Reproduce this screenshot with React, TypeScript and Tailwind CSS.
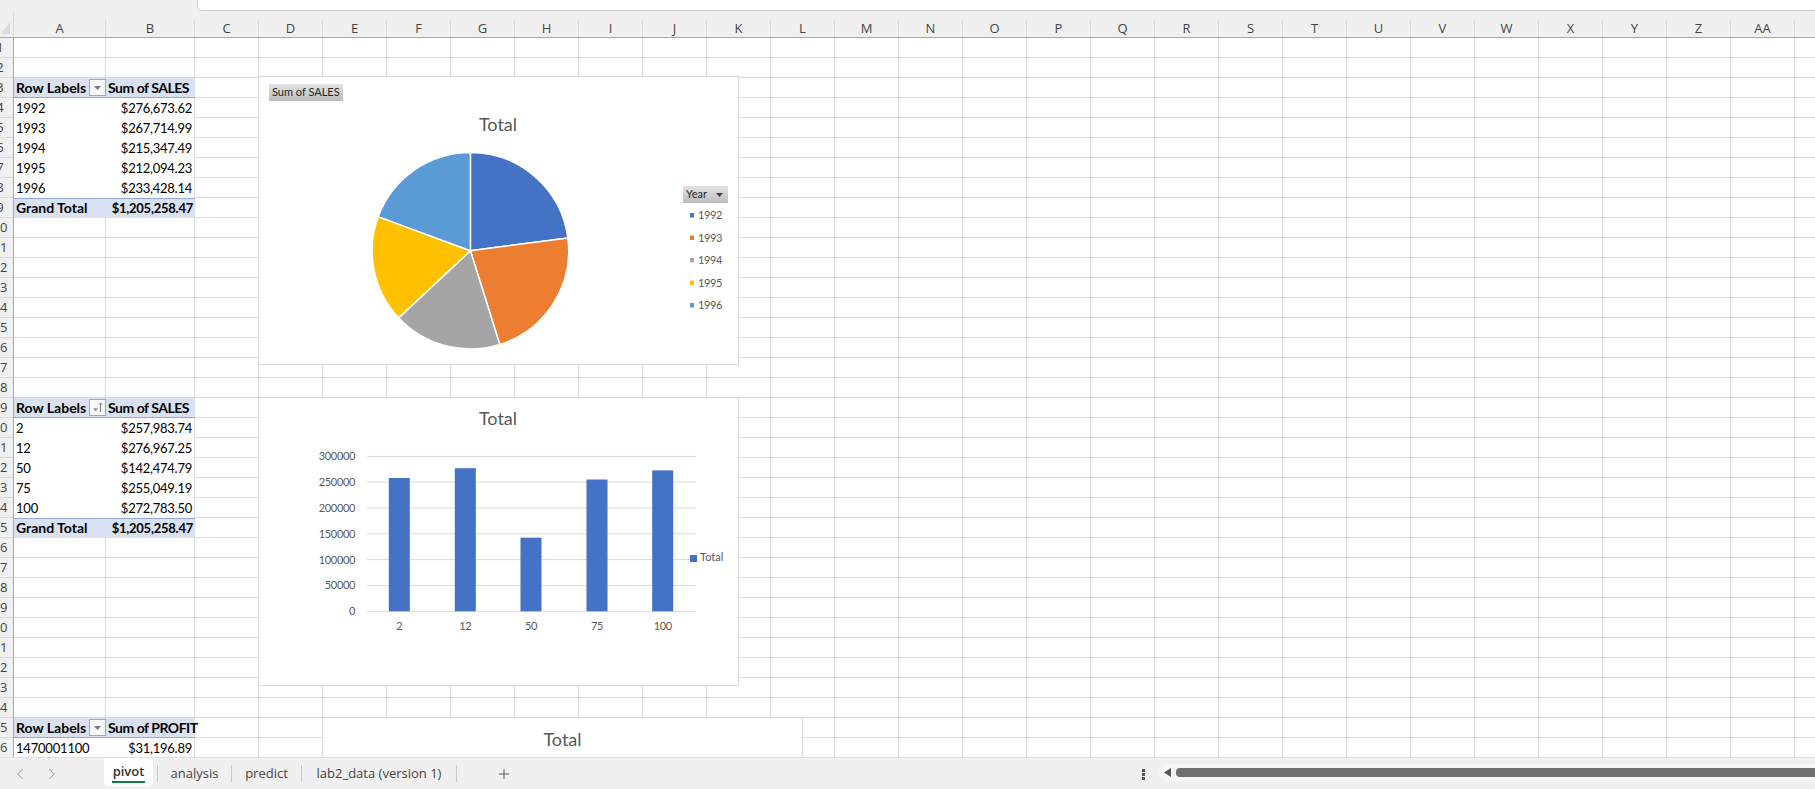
import React from 'react';
import { ChevronLeft, ChevronRight, Plus } from 'lucide-react';

const columnLetters = ['A', 'B', 'C', 'D', 'E', 'F', 'G', 'H', 'I', 'J', 'K', 'L', 'M', 'N', 'O', 'P', 'Q', 'R', 'S', 'T', 'U', 'V', 'W', 'X', 'Y', 'Z', 'AA', 'AB'];
const otherColumns = columnLetters.slice(3);
const rowNumbers = Array.from({ length: 36 }, (_, i) => i + 1);

type Pivot = { kind: 'head' | 'data' | 'total'; a: string; b: string; sorted?: boolean };

const pivotRows: Record<number, Pivot> = {
  3: { kind: 'head', a: 'Row Labels', b: 'Sum of SALES' },
  4: { kind: 'data', a: '1992', b: '$276,673.62' },
  5: { kind: 'data', a: '1993', b: '$267,714.99' },
  6: { kind: 'data', a: '1994', b: '$215,347.49' },
  7: { kind: 'data', a: '1995', b: '$212,094.23' },
  8: { kind: 'data', a: '1996', b: '$233,428.14' },
  9: { kind: 'total', a: 'Grand Total', b: '$1,205,258.47' },
  19: { kind: 'head', a: 'Row Labels', b: 'Sum of SALES', sorted: true },
  20: { kind: 'data', a: '2', b: '$257,983.74' },
  21: { kind: 'data', a: '12', b: '$276,967.25' },
  22: { kind: 'data', a: '50', b: '$142,474.79' },
  23: { kind: 'data', a: '75', b: '$255,049.19' },
  24: { kind: 'data', a: '100', b: '$272,783.50' },
  25: { kind: 'total', a: 'Grand Total', b: '$1,205,258.47' },
  35: { kind: 'head', a: 'Row Labels', b: 'Sum of PROFIT' },
  36: { kind: 'data', a: '1470001100', b: '$31,196.89' },
};

const pieData = [
  { year: '1992', value: 276673.62, color: '#4472C4' },
  { year: '1993', value: 267714.99, color: '#ED7D31' },
  { year: '1994', value: 215347.49, color: '#A5A5A5' },
  { year: '1995', value: 212094.23, color: '#FFC000' },
  { year: '1996', value: 233428.14, color: '#5B9BD5' },
];

const barData = [
  { label: '2', value: 257983.74, x: 140.3 },
  { label: '12', value: 276967.25, x: 206.3 },
  { label: '50', value: 142474.79, x: 272 },
  { label: '75', value: 255049.19, x: 338 },
  { label: '100', value: 272783.5, x: 403.7 },
];

const axisTicks = [300000, 250000, 200000, 150000, 100000, 50000, 0];

function piePaths(cx: number, cy: number, r: number) {
  const total = pieData.reduce((sum, d) => sum + d.value, 0);
  let start = 0;
  return pieData.map((d) => {
    const end = start + (d.value / total) * Math.PI * 2;
    const x1 = cx + r * Math.sin(start);
    const y1 = cy - r * Math.cos(start);
    const x2 = cx + r * Math.sin(end);
    const y2 = cy - r * Math.cos(end);
    start = end;
    return { color: d.color, d: `M${cx} ${cy}L${x1} ${y1}A${r} ${r} 0 0 1 ${x2} ${y2}Z` };
  });
}

function FilterButton({ sorted }: { sorted?: boolean }) {
  return (
    <span className="absolute right-0 top-[1px] w-[17px] h-[17px] border border-[#a6a6a6] bg-[#f8f8f8] flex items-center justify-center">
      <svg width="13" height="13" viewBox="0 0 13 13">
        {sorted ? (
          <>
            <path d="M2 7.5h5L4.5 10z" fill="#7a7a7a" />
            <path d="M9.5 11V2M8 3.5l1.5-1.5L11 3.5" stroke="#7a7a7a" strokeWidth="1" fill="none" />
          </>
        ) : (
          <path d="M3 5h7L6.5 9z" fill="#7a7a7a" />
        )}
      </svg>
    </span>
  );
}

function SheetRow({ n }: { n: number }) {
  const pivot = pivotRows[n];
  const filled = pivot && pivot.kind !== 'data';
  const bold = filled ? 'font-bold' : '';
  return (
    <div className="flex h-[20px] shrink-0">
      <div className="w-[14px] shrink-0 bg-[#f0f0f0] border-r border-[#a8a8a8] overflow-hidden">
        <div className="w-[28px] -ml-[14px] h-[20px] border-b border-[#dadada] text-center text-[13px] leading-[19px] text-[#444] font-['Open_Sans',sans-serif]">
          {n}
        </div>
      </div>
      {pivot ? (
        <>
          <div
            className={`relative w-[92px] shrink-0 pl-[2px] text-black font-['Lato',sans-serif] whitespace-nowrap ${bold} ${
              filled ? 'bg-[#d9e1f2]' : 'bg-white'
            } ${pivot.kind === 'total' ? 'border-t border-[#8ea9db] leading-[18px] text-[14px]' : ''} ${pivot.kind === 'head' ? 'border-b border-[#8ea9db] leading-[19px] text-[14px]' : ''} ${
              pivot.kind === 'data' ? 'leading-[21px] text-[13px] tracking-[-0.2px]' : ''
            }`}
          >
            {pivot.a}
            {pivot.kind === 'head' && <FilterButton sorted={pivot.sorted} />}
          </div>
          <div
            className={`relative z-10 w-[89px] shrink-0 pl-[2px] pr-[2px] text-black font-['Lato',sans-serif] whitespace-nowrap ${bold} ${
              pivot.kind === 'head' ? 'text-left border-b border-[#8ea9db] bg-[#d9e1f2] leading-[19px] text-[14px] tracking-[-0.48px]' : 'text-right'
            } ${pivot.kind === 'total' ? 'border-t border-[#8ea9db] bg-[#d9e1f2] leading-[18px] text-[13px] tracking-[-0.25px]' : ''} ${
              pivot.kind === 'data' ? 'bg-white border-r border-[#dadada] leading-[21px] text-[13px] tracking-[-0.25px]' : ''
            }`}
          >
            {pivot.b}
          </div>
        </>
      ) : (
        <>
          <div className="w-[92px] shrink-0 border-r border-b border-[#dadada]" />
          <div className="w-[89px] shrink-0 border-r border-b border-[#dadada]" />
        </>
      )}
      <div className="w-[64px] shrink-0 border-r border-b border-[#dadada]" />
      {otherColumns.map((c) => (
        <div key={c} className="w-[64px] shrink-0 border-r border-b border-[#dadada]" />
      ))}
    </div>
  );
}

function LegendButton({ label, arrow, className }: { label: string; arrow?: boolean; className: string }) {
  return (
    <div className={`absolute h-[17px] flex items-center justify-between px-[3px] bg-gradient-to-b from-[#e4e4e4] to-[#bcbcbc] text-[11px] text-[#262626] font-['Lato',sans-serif] whitespace-nowrap ${className}`}>
      {label}
      {arrow && (
        <svg width="7" height="4" viewBox="0 0 7 4" className="mr-[2px]">
          <path d="M0 0h7L3.5 4z" fill="#404040" />
        </svg>
      )}
    </div>
  );
}

function PieChart() {
  return (
    <div className="absolute left-[258px] top-[38px] w-[481px] h-[289px] bg-white border border-[#d9d9d9] z-20">
      <LegendButton label="Sum of SALES" className="left-[10px] top-[7px] w-[74px]" />
      <LegendButton label="Year" arrow className="left-[424px] top-[109px] w-[45px]" />
      <svg width="479" height="287" className="absolute left-0 top-0">
        <text x="239" y="54" textAnchor="middle" fontSize="18" fill="#595959" fontFamily="Lato, sans-serif">Total</text>
        {piePaths(211.4, 173.7, 98.3).map((s) => (
          <path key={s.color} d={s.d} fill={s.color} stroke="#ffffff" strokeWidth="1.5" />
        ))}
        {pieData.map((d, i) => (
          <g key={d.year}>
            <rect x={431} y={136 + i * 22.5} width={4} height={4.5} fill={d.color} />
            <text x={439} y={142 + i * 22.5} fontSize="11" letterSpacing="-0.35" fill="#595959" fontFamily="Lato, sans-serif">{d.year}</text>
          </g>
        ))}
      </svg>
    </div>
  );
}

function BarChart() {
  const zeroY = 213.3;
  const plotHeight = 155;
  return (
    <div className="absolute left-[258px] top-[359px] w-[481px] h-[289px] bg-white border border-[#d9d9d9] z-20">
      <svg width="479" height="287" className="absolute left-0 top-0">
        <text x="239" y="27" textAnchor="middle" fontSize="18" fill="#595959" fontFamily="Lato, sans-serif">Total</text>
        {axisTicks.map((t) => {
          const y = zeroY - (t / 300000) * plotHeight;
          return (
            <g key={t}>
              <line x1="108" x2="437" y1={y} y2={y} stroke="#d9d9d9" strokeWidth="1" />
              <text x="96" y={y + 4} textAnchor="end" fontSize="11" letterSpacing="-0.35" fill="#595959" fontFamily="Lato, sans-serif">{t}</text>
            </g>
          );
        })}
        {barData.map((b) => {
          const h = (b.value / 300000) * plotHeight;
          return (
            <g key={b.label}>
              <rect x={b.x - 10.5} y={zeroY - h} width={21} height={h} fill="#4472C4" />
              <text x={b.x} y={232} textAnchor="middle" fontSize="11" letterSpacing="-0.35" fill="#595959" fontFamily="Lato, sans-serif">{b.label}</text>
            </g>
          );
        })}
        <rect x="431" y="157" width="7" height="7" fill="#4472C4" />
        <text x="441" y="163" fontSize="11" fill="#595959" fontFamily="Lato, sans-serif">Total</text>
      </svg>
    </div>
  );
}

function ThirdChart() {
  return (
    <div className="absolute left-[322px] top-[679px] w-[481px] h-[289px] bg-white border border-[#d9d9d9] z-20">
      <div className="text-center pt-[10px] text-[18px] leading-[22px] text-[#595959] font-['Lato',sans-serif]">Total</div>
    </div>
  );
}

export default function App() {
  return (
    <div className="w-[1815px] h-[789px] flex flex-col overflow-hidden bg-white">
      {/* formula bar edge */}
      <div className="h-[11px] shrink-0 bg-[#f0f0f0] pl-[197px]">
        <div className="h-[11px] bg-white border-l border-b border-[#d0d0d0] rounded-bl-[5px]" />
      </div>

      {/* column headers */}
      <div className="h-[27px] shrink-0 flex bg-[#f0f0f0] border-b border-[#a8a8a8] text-[13px] text-[#444] font-['Open_Sans',sans-serif] pt-[9px]">
        <div className="w-[14px] shrink-0 border-r border-[#dcdcdc] -mt-[9px] relative">
          <svg width="10" height="12" viewBox="0 0 10 12" className="absolute left-0 top-[11px]">
            <path d="M10 0v12H0z" fill="#dcdcdc" />
          </svg>
        </div>
        {columnLetters.map((c, i) => (
          <div
            key={c}
            className={`shrink-0 border-r border-[#dcdcdc] text-center leading-[17px] ${i === 0 ? 'w-[92px]' : i === 1 ? 'w-[89px]' : 'w-[64px]'}`}
          >
            {c}
          </div>
        ))}
      </div>

      {/* sheet */}
      <div className="relative flex-1 overflow-hidden">
        {rowNumbers.map((n) => (
          <SheetRow key={n} n={n} />
        ))}
        <PieChart />
        <BarChart />
        <ThirdChart />
      </div>

      {/* sheet tabs */}
      <div className="h-[32px] shrink-0 flex items-center bg-[#f0f0f0] text-[13px] text-[#444] font-['Open_Sans',sans-serif] border-t border-[#e0e0e0]">
        <div className="w-[104px] shrink-0 flex items-center pl-[11px] gap-[14px] text-[#8c8c8c]">
          <ChevronLeft size={18} strokeWidth={1.25} />
          <ChevronRight size={18} strokeWidth={1.25} />
        </div>
        <div className="w-[49px] h-[28px] self-start shrink-0 bg-white rounded-b-[5px] flex flex-col items-center">
          <span className="font-semibold leading-[20px] mt-[3px] text-[#333]">pivot</span>
          <span className="w-[33px] h-[2px] bg-[#107c41]" />
        </div>
        <div className="w-[4px] shrink-0" />
        <div className="w-[74px] h-[17px] shrink-0 border-l border-[#c8c8c8] flex items-center justify-center">analysis</div>
        <div className="w-[70px] h-[17px] shrink-0 border-l border-[#c8c8c8] flex items-center justify-center">predict</div>
        <div className="w-[156px] h-[17px] shrink-0 border-l border-r border-[#c8c8c8] flex items-center justify-center">lab2_data (version 1)</div>
        <div className="ml-[39px] shrink-0">
          <Plus size={16} strokeWidth={1.25} />
        </div>
        <div className="ml-[630px] w-[3px] shrink-0 flex flex-col gap-[1px] mt-[1px]">
          <span className="h-[3px] bg-[#555]" />
          <span className="h-[3px] bg-[#555]" />
          <span className="h-[3px] bg-[#555]" />
        </div>
        <div className="ml-[14px] flex-1 h-[17px] -mt-[2px] bg-[#f6f6f6] rounded-l-[8px] flex items-center">
          <svg width="7" height="9" viewBox="0 0 7 9" className="ml-[5px]">
            <path d="M7 0v9L0 4.5z" fill="#555" />
          </svg>
          <div className="ml-[5px] flex-1 h-[9px] bg-[#707070] rounded-l-[4px]" />
        </div>
      </div>
    </div>
  );
}
